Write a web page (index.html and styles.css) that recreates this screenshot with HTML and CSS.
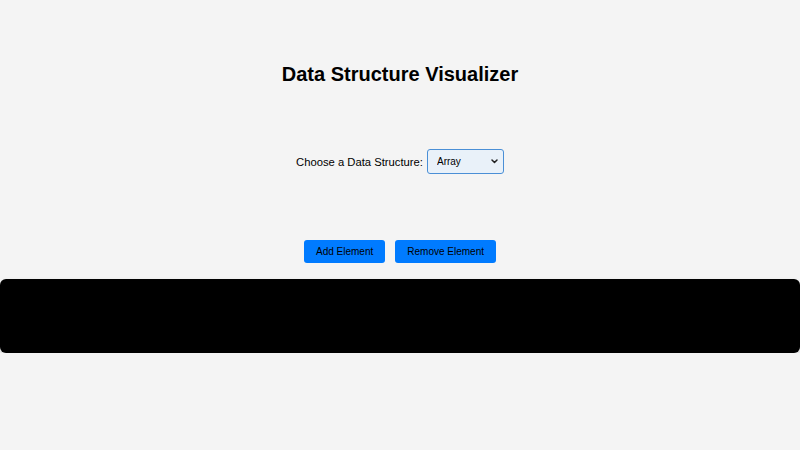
FILE: index.html
```html
<!DOCTYPE html>
<html lang="en">
<head>
<meta charset="utf-8">
<title>Data Structure Visualizer</title>
<link rel="stylesheet" href="styles.css">
</head>
<body>
<div class="app">
  <h1 class="title">Data Structure Visualizer</h1>
  <div class="chooser">
    <label class="chooser-label" for="ds">Choose a Data Structure:</label>
    <span class="select-wrap">
      <select id="ds" class="chooser-select">
        <option>Array</option>
        <option>Stack</option>
        <option>Queue</option>
        <option>Linked List</option>
      </select>
      <svg class="select-arrow" width="7" height="5" viewBox="0 0 7 5" aria-hidden="true">
        <path d="M1 1 L3.5 3.5 L6 1" fill="none" stroke="#222" stroke-width="1.5" stroke-linecap="round" stroke-linejoin="round"/>
      </svg>
    </span>
  </div>
  <div class="actions">
    <button class="btn">Add Element</button>
    <button class="btn">Remove Element</button>
  </div>
  <div class="canvas"></div>
</div>
</body>
</html>
```
FILE: styles.css
```css
html, body {
  margin: 0;
  padding: 0;
  background: #f4f4f4;
  font-family: "Liberation Sans", Arial, sans-serif;
  color: #000;
}
.app {
  display: flex;
  flex-direction: column;
  align-items: center;
  padding-top: 62px;
}
.title {
  margin: 0;
  font-size: 20px;
  font-weight: bold;
  line-height: 24px;
}
.chooser {
  margin-top: 63px;
  display: flex;
  align-items: center;
  gap: 4px;
}
.chooser-label {
  font-size: 11.25px;
}
.select-wrap {
  position: relative;
  display: flex;
}
.chooser-select {
  appearance: none;
  -webkit-appearance: none;
  width: 77px;
  height: 25px;
  font-family: "Liberation Sans", Arial, sans-serif;
  font-size: 10px;
  padding: 0 16px 0 9px;
  border: 1px solid #4a8fd6;
  border-radius: 3px;
  background: #e9f1f9;
  color: #000;
}
.select-arrow {
  position: absolute;
  right: 6px;
  top: 10px;
  pointer-events: none;
}
.actions {
  margin-top: 66px;
  display: flex;
  gap: 10px;
}
.btn {
  height: 23px;
  padding: 0 12px;
  border: none;
  border-radius: 3px;
  background: #007bff;
  color: #000;
  font-family: "Liberation Sans", Arial, sans-serif;
  font-size: 10px;
}
.canvas {
  margin-top: 16px;
  align-self: stretch;
  height: 74px;
  background: #000;
  border-radius: 6px;
  box-shadow: 0 2px 4px rgba(0,0,0,0.15);
}
```
